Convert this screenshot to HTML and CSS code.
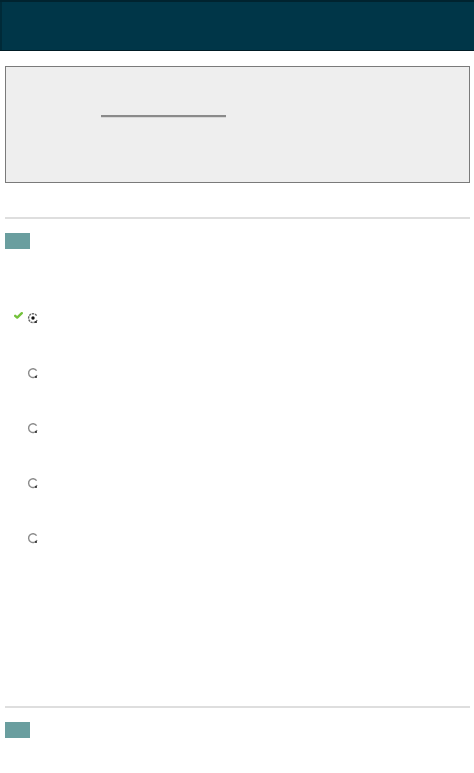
FILE: index.html
```html
<!DOCTYPE html>
<html>
<head>
<meta charset="utf-8">
<link rel="stylesheet" href="styles.css">
</head>
<body>
<header class="topbar"></header>
<main class="content">
  <section class="panel">
    <div class="panel-line"></div>
  </section>
  <hr class="rule rule-first">
  <div class="tag"></div>
  <ul class="options">
    <li class="option">
      <svg class="check" width="9" height="7" viewBox="0 0 9 7"><path d="M1.2 3.8 L3.2 5.6 L7.8 1.2" fill="none" stroke="#74c23c" stroke-width="2.4" stroke-linecap="round" stroke-linejoin="round"/></svg>
      <svg class="radio" width="12" height="12" viewBox="0 0 12 12"><path d="M9.6 3.6 A4.4 4.4 0 1 0 10 8" fill="none" stroke="#666" stroke-width="1.4" stroke-dasharray="2.2 0.8"/><circle cx="6" cy="6" r="1.7" fill="#111"/><circle cx="9" cy="10" r="1" fill="#111"/></svg>
    </li>
    <li class="option">
      <span class="check-space"></span>
      <svg class="radio" width="12" height="12" viewBox="0 0 12 12"><path d="M9.6 3.6 A4.4 4.4 0 1 0 10 8" fill="none" stroke="#8a8a8a" stroke-width="1.4"/><circle cx="9" cy="10" r="1" fill="#222"/></svg>
    </li>
    <li class="option">
      <span class="check-space"></span>
      <svg class="radio" width="12" height="12" viewBox="0 0 12 12"><path d="M9.6 3.6 A4.4 4.4 0 1 0 10 8" fill="none" stroke="#8a8a8a" stroke-width="1.4"/><circle cx="9" cy="10" r="1" fill="#222"/></svg>
    </li>
    <li class="option">
      <span class="check-space"></span>
      <svg class="radio" width="12" height="12" viewBox="0 0 12 12"><path d="M9.6 3.6 A4.4 4.4 0 1 0 10 8" fill="none" stroke="#8a8a8a" stroke-width="1.4"/><circle cx="9" cy="10" r="1" fill="#222"/></svg>
    </li>
    <li class="option">
      <span class="check-space"></span>
      <svg class="radio" width="12" height="12" viewBox="0 0 12 12"><path d="M9.6 3.6 A4.4 4.4 0 1 0 10 8" fill="none" stroke="#8a8a8a" stroke-width="1.4"/><circle cx="9" cy="10" r="1" fill="#222"/></svg>
    </li>
  </ul>
  <hr class="rule rule-second">
  <div class="tag"></div>
</main>
</body>
</html>
```
FILE: styles.css
```css
html, body {
  margin: 0;
  padding: 0;
  background: #ffffff;
  font-family: "Liberation Sans", Arial, sans-serif;
}

.topbar {
  height: 48px;
  background: #003648;
  border-top: 2px solid #00232f;
  border-bottom: 1px solid #001b25;
  box-shadow: inset 2px 0 0 #002a38;
}

.content {
  padding: 0 4px 0 5px;
}

.panel {
  margin-top: 15px;
  background: #eeeeee;
  border: 1px solid #7a7a7a;
  padding: 48px 0 0 95px;
  box-sizing: border-box;
  height: 117px;
}

.panel-line {
  width: 125px;
  height: 2px;
  background: #8a8a8a;
  border-bottom: 1px solid #d8d8d8;
}

.rule {
  border: 0;
  height: 2px;
  background: #dedede;
  margin: 0;
}

.rule-first {
  margin-top: 34px;
}

.tag {
  margin-top: 14px;
  width: 25px;
  height: 16px;
  background: #6a9e9f;
}

.options {
  list-style: none;
  margin: 41px 0 0 0;
  padding: 0;
}

.option {
  height: 55px;
  display: flex;
  align-items: center;
  padding-left: 9px;
}

.check {
  width: 9px;
  height: 7px;
  margin-top: -4px;
}

.check-space {
  width: 9px;
}

.radio {
  margin-left: 4px;
}

.rule-second {
  margin-top: 141px;
}
```
